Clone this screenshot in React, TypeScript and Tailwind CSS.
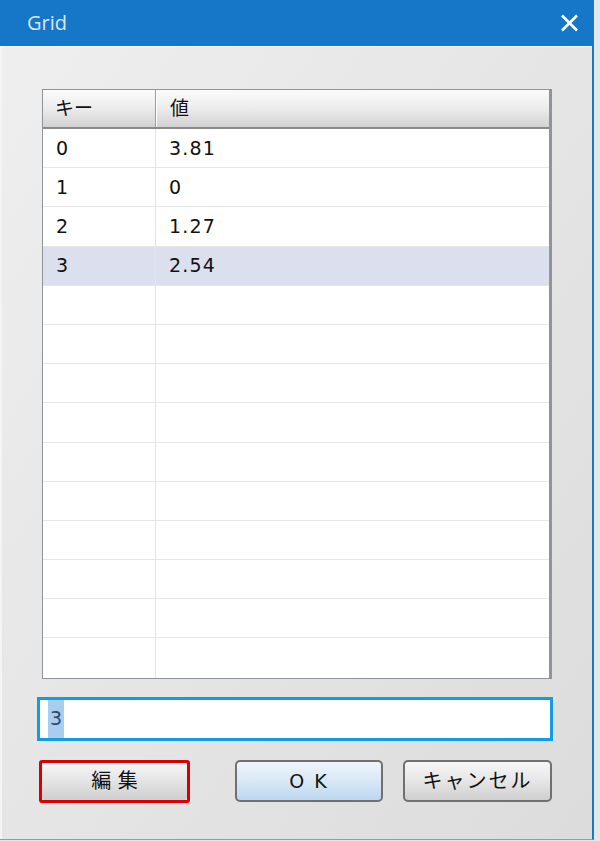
const rows: [string, string][] = [
  ["0", "3.81"],
  ["1", "0"],
  ["2", "1.27"],
  ["3", "2.54"],
  ["", ""],
  ["", ""],
  ["", ""],
  ["", ""],
  ["", ""],
  ["", ""],
  ["", ""],
  ["", ""],
  ["", ""],
  ["", ""],
]

const jp = "font-['DejaVu_Sans','Noto_Sans_CJK_JP',sans-serif]"

export default function App() {
  return (
    <div className="w-[600px] h-[841px] flex bg-[#e3e8ee]">
      <div className="w-[594px] h-[840px] flex flex-col border-r-2 border-[#1a78c8] border-b border-b-[#9a9a9a] bg-gradient-to-br from-[#efefef] to-[#dcdcdc]">
        {/* title bar */}
        <div className="h-[46px] shrink-0 flex items-center justify-between bg-[#1676c8] pl-[27px] pr-[12px]">
          <span className="text-[20px] text-[#d6e8f8] font-['Open_Sans',sans-serif]">Grid</span>
          <svg width="19" height="18" viewBox="0 0 19 18" className="mr-[1px]">
            <path d="M2 1.5 L17 16.5 M17 1.5 L2 16.5" stroke="#ffffff" strokeWidth="2.6" />
          </svg>
        </div>
        <div className="h-px bg-[#f6f6f6]" />

        <div className="flex-1 flex flex-col pl-[35px] pt-[42px] border-l-2 border-l-[#f4f4f4]">
          {/* grid */}
          <div className="ml-[5px] w-[510px] border border-[#8f949a] border-r-[3px] bg-white flex flex-col">
            <div className={`h-[39px] flex border-b-2 border-[#8a8a8a] bg-gradient-to-b from-[#fbfbfb] via-[#ececec] to-[#d2d2d2] text-[19px] text-[#111] ${jp}`}>
              <div className="w-[113px] flex items-center pl-[12px] border-r border-[#9c9c9c]">キー</div>
              <div className="flex-1 flex items-center pl-[13px] border-l border-white">値</div>
            </div>
            {rows.map((r, i) => (
              <div
                key={i}
                className={`h-[39.2px] flex border-b border-[#e6e6e6] text-[19px] text-[#111] tracking-[1.2px] font-['DejaVu_Sans',sans-serif] ${
                  i === 3 ? "bg-[#dcdfee]" : "bg-white"
                } ${i === rows.length - 1 ? "border-b-0" : ""}`}
              >
                <div className="w-[113px] flex items-center pl-[13px] border-r border-[#e2e2f2]">{r[0]}</div>
                <div className="flex-1 flex items-center pl-[13px]">{r[1]}</div>
              </div>
            ))}
          </div>

          {/* text box */}
          <div className="mt-[18px] w-[516px] h-[44px] border-[3px] border-[#119ce8] bg-white flex items-center pl-[8px]">
            <span className="h-[38px] flex items-center px-[2px] bg-[#a9cdee] text-[19px] text-[#2d4770] font-['DejaVu_Sans',sans-serif]">3</span>
          </div>

          {/* buttons */}
          <div className="mt-[19px] flex items-center">
            <div className="ml-[2px] w-[151px] h-[43px] border-[3px] border-[#d80000] rounded-[3px] flex">
              <div className={`flex-1 rounded-[3px] bg-gradient-to-b from-[#f6f6f6] via-[#e4e4e4] to-[#cfcfcf] flex items-center justify-center text-[20px] text-[#111] ${jp}`}>
                編 集
              </div>
            </div>
            <div className={`ml-[45px] w-[148px] h-[42px] rounded-[5px] border-2 border-[#707070] bg-gradient-to-b from-[#eef5fc] via-[#d9e8f6] to-[#bcd6ee] flex items-center justify-center text-[19px] text-[#111] tracking-[2px] font-['DejaVu_Sans',sans-serif]`}>
              O K
            </div>
            <div className={`ml-[20px] w-[149px] h-[42px] rounded-[5px] border-2 border-[#707070] bg-gradient-to-b from-[#f7f7f7] via-[#e6e6e6] to-[#cfcfcf] flex items-center justify-center text-[20px] text-[#111] tracking-[2px] ${jp}`}>
              キャンセル
            </div>
          </div>
        </div>
      </div>
    </div>
  )
}
